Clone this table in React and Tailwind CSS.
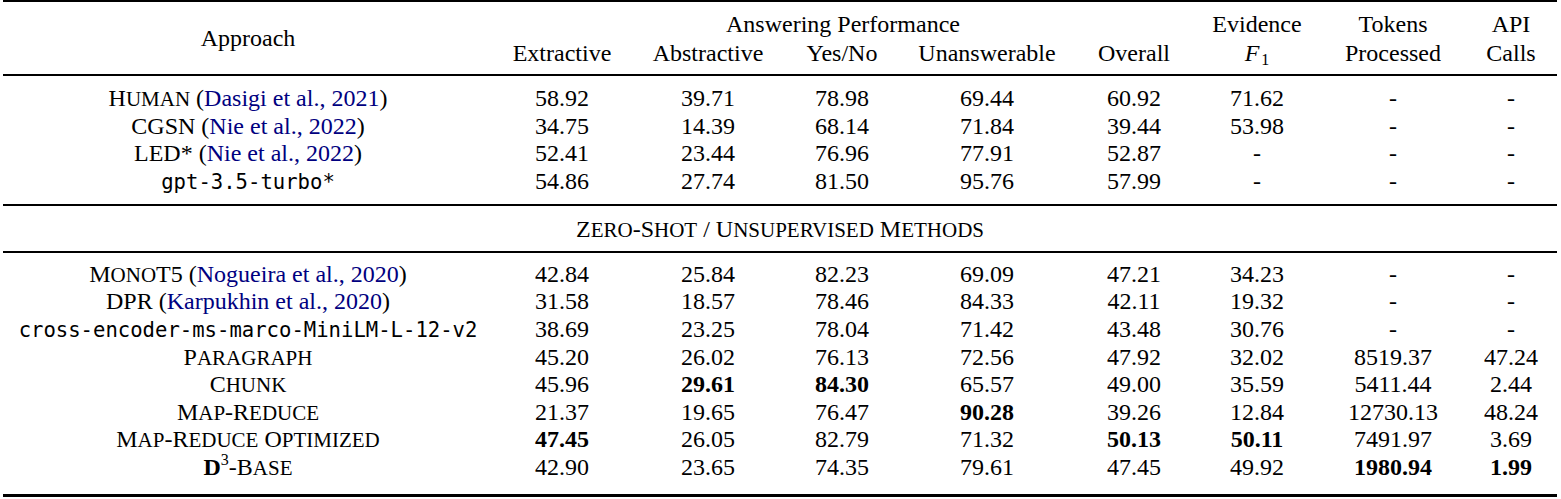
import React from "react";

const COLS =
  "grid grid-cols-[490px_138px_154px_114px_176px_118px_128px_144px_92px]";

function SC({ t }) {
  const parts = t.split(/([a-z]+)/);
  return (
    <>
      {parts.map((p, i) =>
        /^[a-z]+$/.test(p) ? (
          <span key={i} className="text-[21px]">
            {p.toUpperCase()}
          </span>
        ) : (
          <React.Fragment key={i}>{p}</React.Fragment>
        )
      )}
    </>
  );
}

function Cite({ a, y }) {
  return (
    <>
      {" "}(<span className="text-[#000080]">{a}, {y}</span>)
    </>
  );
}

function Mono({ t }) {
  return (
    <span className="font-['DejaVu_Sans_Mono',monospace] text-[20.6px]">
      {t}
    </span>
  );
}

const top = [
  {
    name: (
      <>
        <SC t="Human" />
        <Cite a="Dasigi et al." y="2021" />
      </>
    ),
    v: ["58.92", "39.71", "78.98", "69.44", "60.92", "71.62", "-", "-"],
  },
  {
    name: (
      <>
        CGSN
        <Cite a="Nie et al." y="2022" />
      </>
    ),
    v: ["34.75", "14.39", "68.14", "71.84", "39.44", "53.98", "-", "-"],
  },
  {
    name: (
      <>
        LED*
        <Cite a="Nie et al." y="2022" />
      </>
    ),
    v: ["52.41", "23.44", "76.96", "77.91", "52.87", "-", "-", "-"],
  },
  {
    name: <Mono t="gpt-3.5-turbo*" />,
    v: ["54.86", "27.74", "81.50", "95.76", "57.99", "-", "-", "-"],
  },
];

const bottom = [
  {
    name: (
      <>
        <SC t="MonoT5" />
        <Cite a="Nogueira et al." y="2020" />
      </>
    ),
    v: ["42.84", "25.84", "82.23", "69.09", "47.21", "34.23", "-", "-"],
  },
  {
    name: (
      <>
        DPR
        <Cite a="Karpukhin et al." y="2020" />
      </>
    ),
    v: ["31.58", "18.57", "78.46", "84.33", "42.11", "19.32", "-", "-"],
  },
  {
    name: <Mono t="cross-encoder-ms-marco-MiniLM-L-12-v2" />,
    v: ["38.69", "23.25", "78.04", "71.42", "43.48", "30.76", "-", "-"],
  },
  {
    name: <SC t="Paragraph" />,
    v: ["45.20", "26.02", "76.13", "72.56", "47.92", "32.02", "8519.37", "47.24"],
  },
  {
    name: <SC t="Chunk" />,
    v: ["45.96", "!29.61", "!84.30", "65.57", "49.00", "35.59", "5411.44", "2.44"],
  },
  {
    name: <SC t="Map-Reduce" />,
    v: ["21.37", "19.65", "76.47", "!90.28", "39.26", "12.84", "12730.13", "48.24"],
  },
  {
    name: <SC t="Map-Reduce Optimized" />,
    v: ["!47.45", "26.05", "82.79", "71.32", "!50.13", "!50.11", "7491.97", "3.69"],
  },
  {
    name: (
      <>
        <span className="font-bold">D</span>
        <span className="relative -top-[10px] text-[16px]">3</span>
        <SC t="-Base" />
      </>
    ),
    v: ["42.90", "23.65", "74.35", "79.61", "47.45", "49.92", "!1980.94", "!1.99"],
  },
];

function Row({ r }) {
  return (
    <div className={COLS + " h-[27.6px]"}>
      <div className="text-center whitespace-nowrap">
        <span>{r.name}</span>
      </div>
      {r.v.map((x, i) => (
        <div key={i} className="text-center whitespace-nowrap">
          {x.startsWith("!") ? (
            <span className="font-bold">{x.slice(1)}</span>
          ) : (
            <span>{x}</span>
          )}
        </div>
      ))}
    </div>
  );
}

export default function App() {
  return (
    <div className="w-[1561px] h-[499px] overflow-hidden bg-white text-black font-['Liberation_Serif',serif]">
      <div className="ml-[3px] w-[1554px] text-[24px]">
        <div className="h-[2px] bg-black" />
        <div className={COLS + " grid-rows-[28.5px_28.5px] pt-[8px] pb-[7px] leading-[28.5px]"}>
          <div className="row-span-2 flex items-center justify-center">Approach</div>
          <div className="col-span-5 text-center whitespace-nowrap">
            Answering Performance
          </div>
          <div className="text-center">Evidence</div>
          <div className="text-center">Tokens</div>
          <div className="text-center">API</div>
          <div className="text-center">Extractive</div>
          <div className="text-center">Abstractive</div>
          <div className="text-center">Yes/No</div>
          <div className="text-center">Unanswerable</div>
          <div className="text-center">Overall</div>
          <div className="text-center whitespace-nowrap">
            <span className="italic pr-[2px]">F</span>
            <span className="relative top-[4px] text-[16px]">1</span>
          </div>
          <div className="text-center">Processed</div>
          <div className="text-center">Calls</div>
        </div>
        <div className="h-[2px] bg-black" />
        <div className="pt-[9px] pb-[8.5px] leading-[27.6px]">
          {top.map((r, i) => (
            <Row key={i} r={r} />
          ))}
        </div>
        <div className="h-[2px] bg-black" />
        <div className="pt-[10px] pb-[7.4px] leading-[27.6px] h-[45px] text-center whitespace-nowrap">
          <SC t="Zero-Shot / Unsupervised Methods" />
        </div>
        <div className="h-[2px] bg-black" />
        <div className="pt-[8px] pb-[12px] leading-[27.6px]">
          {bottom.map((r, i) => (
            <Row key={i} r={r} />
          ))}
        </div>
        <div className="h-[3px] bg-black" />
      </div>
    </div>
  );
}
